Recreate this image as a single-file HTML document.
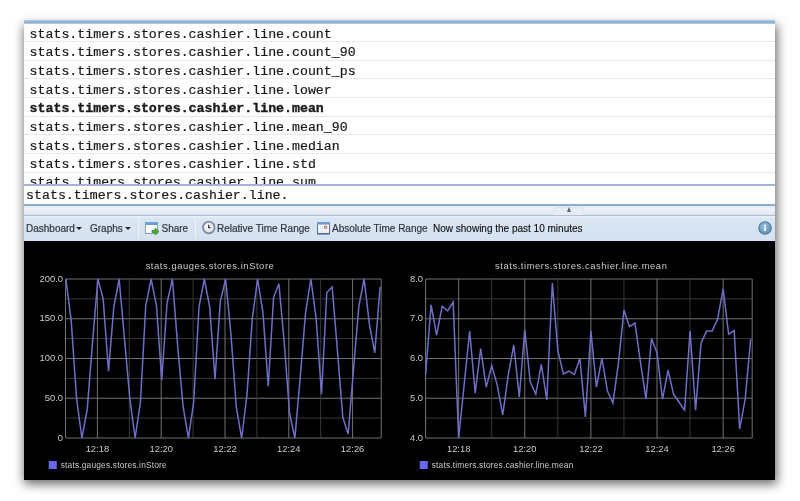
<!DOCTYPE html>
<html><head><meta charset="utf-8">
<style>
*{margin:0;padding:0;box-sizing:border-box}
html,body{width:800px;height:501px;background:#fff;overflow:hidden;position:relative}
#shd{position:absolute;left:24px;top:23px;width:751px;height:457px;box-shadow:0.5px 3px 10px 1px rgba(0,0,0,.6)}
#win{position:absolute;left:24px;top:20px;will-change:transform;filter:blur(0.35px);width:751px;height:460px}
#list{position:absolute;left:0;top:0;width:751px;height:165px;background:#fff;border-top:3px solid transparent;overflow:hidden}
#band{position:absolute;left:0;top:0;width:751px;height:4px;background:linear-gradient(#b2c8e4 0,#9dbadd 35%,#86a7cb 75%,#d6e8f3 100%)}
.row{position:absolute;left:0;width:751px;height:18.6px;border-bottom:1px solid #e9e9e9;font:13.25px "Liberation Mono",monospace;color:#1a1a1a;padding-left:5.6px;padding-top:2.3px;line-height:18px;white-space:pre;-webkit-text-stroke:0.2px #1a1a1a}
.row.b{font-weight:bold;-webkit-text-stroke:0.35px #1a1a1a}
#inp{position:absolute;left:0;top:164px;width:751px;height:22px;background:#fffffd;border-top:2px solid #a6b0db;border-bottom:2.5px solid #8eabcf;font:13.25px "Liberation Mono",monospace;color:#1a1a1a;padding-left:2.1px;padding-top:0.5px;line-height:18px;white-space:pre;-webkit-text-stroke:0.2px #1a1a1a}
#split{position:absolute;left:0;top:186px;width:751px;height:10px;background:linear-gradient(#dce6f2 0,#eef3fa 25%,#e9eff8 55%,#dbe5f2 100%);border-bottom:1.5px solid #b2c0d4}
#tb{position:absolute;left:0;top:196px;width:751px;height:25px;background:linear-gradient(#eaf1fa 0,#e4ecf7 1px,#dae5f2 3px,#d4e1f0 100%);font:10px "Liberation Sans",sans-serif;color:#2e3440;-webkit-text-stroke:0.2px #2e3440}
#tb span{position:absolute;top:7px;white-space:pre}
#charts{position:absolute;left:0;top:221px;width:751px;height:239px;background:#000}
.sep{position:absolute;top:2px;width:1px;height:21px;background:#c4d2e4;border-right:1px solid #eef3fa}
.arr{position:absolute;top:11px;width:0;height:0;border-left:3px solid transparent;border-right:3px solid transparent;border-top:3px solid #222}
</style></head><body>
<div id="shd"></div>
<div id="win">
  <div id="list">
    <div class="row" style="top:0.45px">stats.timers.stores.cashier.line.count</div>
    <div class="row" style="top:19.10px">stats.timers.stores.cashier.line.count_90</div>
    <div class="row" style="top:37.75px">stats.timers.stores.cashier.line.count_ps</div>
    <div class="row" style="top:56.40px">stats.timers.stores.cashier.line.lower</div>
    <div class="row b" style="top:75.05px">stats.timers.stores.cashier.line.mean</div>
    <div class="row" style="top:93.70px">stats.timers.stores.cashier.line.mean_90</div>
    <div class="row" style="top:112.35px">stats.timers.stores.cashier.line.median</div>
    <div class="row" style="top:131.00px">stats.timers.stores.cashier.line.std</div>
    <div class="row" style="top:148.9px">stats.timers.stores.cashier.line.sum</div>
  </div>
  <div id="band"></div>
  <div id="inp">stats.timers.stores.cashier.line.</div>
  <div id="split"><div style="position:absolute;left:529px;top:1px;width:31px;height:8px;background:#e6edf6;border:1px solid #dbe3ee;border-bottom:none;border-radius:4px 4px 0 0"></div><div style="position:absolute;left:542.6px;top:1.2px;width:0;height:0;border-left:2.8px solid transparent;border-right:2.8px solid transparent;border-bottom:5.5px solid #5e6266"></div></div>
  <div id="tb">
    <span style="left:2px">Dashboard</span><div class="arr" style="left:52px"></div>
    <span style="left:66px">Graphs</span><div class="arr" style="left:101px"></div>
    <div class="sep" style="left:114px"></div>
    <span style="left:137.5px">Share</span>
    <div class="sep" style="left:171px"></div>
    <span style="left:193px">Relative Time Range</span>
    <span style="left:308px">Absolute Time Range</span>
    <span style="left:409px;color:#0a0a0a;-webkit-text-stroke:0.1px #0a0a0a">Now showing the past 10 minutes</span>

    <svg style="position:absolute;left:120px;top:5px" width="16" height="15" viewBox="0 0 16 15">
      <rect x="1.5" y="1.5" width="12" height="11" fill="#fbfcfd" stroke="#8fa3bd" stroke-width="1"/>
      <rect x="1" y="1" width="13" height="3" fill="#6e9fd6"/>
      <path d="M8 9.5h3v-2.5l4 3.5-4 3.5v-2.5h-3z" fill="#4fae3a" stroke="#2f8a22" stroke-width="0.8" stroke-linejoin="round"/>
    </svg>
    <svg style="position:absolute;left:178px;top:5px" width="14" height="14" viewBox="0 0 14 14">
      <defs><radialGradient id="kg" cx="45%" cy="40%" r="60%"><stop offset="0" stop-color="#fbfbfb"/><stop offset="1" stop-color="#d9dbe0"/></radialGradient></defs>
      <circle cx="6.8" cy="6.5" r="5.8" fill="url(#kg)" stroke="#7a86a6" stroke-width="1.7"/>
      <path d="M6.7 3.7V6.6h1.8" fill="none" stroke="#2b2b2b" stroke-width="1.2"/>
    </svg>
    <svg style="position:absolute;left:292px;top:5px" width="15" height="15" viewBox="0 0 15 15">
      <defs><linearGradient id="cg" x1="0" y1="0" x2="0" y2="1"><stop offset="0" stop-color="#fdfdfe"/><stop offset="1" stop-color="#e4e8ef"/></linearGradient></defs>
      <rect x="1.5" y="1.5" width="12" height="11.5" fill="url(#cg)" stroke="#5f769a" stroke-width="1"/>
      <rect x="1" y="1" width="13" height="2.6" fill="#6f9ad2"/>
      <line x1="1.5" y1="12.7" x2="13.5" y2="12.7" stroke="#3f5f8f" stroke-width="1"/>
      <circle cx="9.6" cy="6.2" r="1.3" fill="#f3e6e6" stroke="#b44848" stroke-width="0.9"/>
    </svg>
    <svg style="position:absolute;left:733.5px;top:5px" width="14" height="14" viewBox="0 0 14 14">
      <defs><radialGradient id="ig" cx="45%" cy="35%" r="65%"><stop offset="0" stop-color="#9cc0dc"/><stop offset="1" stop-color="#5f8fb2"/></radialGradient></defs>
      <circle cx="7" cy="7" r="6.2" fill="url(#ig)" stroke="#4e7c9c" stroke-width="1.1"/>
      <circle cx="7" cy="4.4" r="1.0" fill="#f4fbff"/>
      <path d="M6.3 5.9h1.4l.5 3.9h-2.4z" fill="#f4fbff"/>
    </svg>
  </div>
  <div id="charts"></div>
</div>
<!--CHARTS--><svg id="chsvg" width="800" height="501" style="position:absolute;left:0;top:0;will-change:transform;filter:blur(0.3px)">
<style>.t{font:9.4px "Liberation Sans",sans-serif;fill:#c8c8c8}.tt{font:9.4px "Liberation Sans",sans-serif;letter-spacing:0.56px;fill:#c8c8c8}.tl{font:8.4px "Liberation Sans",sans-serif;letter-spacing:0.17px;fill:#c8c8c8}</style>
<line x1="65.5" y1="279.00" x2="381.2" y2="279.00" stroke="#727272" stroke-width="1"/>
<line x1="65.5" y1="298.88" x2="381.2" y2="298.88" stroke="#383838" stroke-width="1"/>
<line x1="65.5" y1="318.75" x2="381.2" y2="318.75" stroke="#727272" stroke-width="1"/>
<line x1="65.5" y1="338.62" x2="381.2" y2="338.62" stroke="#383838" stroke-width="1"/>
<line x1="65.5" y1="358.50" x2="381.2" y2="358.50" stroke="#727272" stroke-width="1"/>
<line x1="65.5" y1="378.38" x2="381.2" y2="378.38" stroke="#383838" stroke-width="1"/>
<line x1="65.5" y1="398.25" x2="381.2" y2="398.25" stroke="#727272" stroke-width="1"/>
<line x1="65.5" y1="418.12" x2="381.2" y2="418.12" stroke="#383838" stroke-width="1"/>
<line x1="65.5" y1="438.00" x2="381.2" y2="438.00" stroke="#727272" stroke-width="1"/>
<line x1="65.50" y1="279" x2="65.50" y2="438" stroke="#383838" stroke-width="1"/>
<line x1="97.40" y1="279" x2="97.40" y2="438" stroke="#727272" stroke-width="1"/>
<line x1="129.30" y1="279" x2="129.30" y2="438" stroke="#383838" stroke-width="1"/>
<line x1="161.20" y1="279" x2="161.20" y2="438" stroke="#727272" stroke-width="1"/>
<line x1="193.10" y1="279" x2="193.10" y2="438" stroke="#383838" stroke-width="1"/>
<line x1="225.00" y1="279" x2="225.00" y2="438" stroke="#727272" stroke-width="1"/>
<line x1="256.90" y1="279" x2="256.90" y2="438" stroke="#383838" stroke-width="1"/>
<line x1="288.80" y1="279" x2="288.80" y2="438" stroke="#727272" stroke-width="1"/>
<line x1="320.70" y1="279" x2="320.70" y2="438" stroke="#383838" stroke-width="1"/>
<line x1="352.60" y1="279" x2="352.60" y2="438" stroke="#727272" stroke-width="1"/>
<line x1="65.5" y1="279" x2="65.5" y2="438" stroke="#727272" stroke-width="1"/>
<line x1="381.2" y1="279" x2="381.2" y2="438" stroke="#727272" stroke-width="1"/>
<polyline points="65.90,279.00 71.23,321.13 76.55,398.25 81.88,438.00 87.20,409.38 92.53,342.60 97.85,279.00 103.18,298.88 108.50,371.22 113.83,306.82 119.15,279.00 124.48,338.62 129.80,398.25 135.12,438.00 140.45,402.23 145.78,305.24 151.10,279.00 156.43,305.24 161.75,379.97 167.07,302.85 172.40,279.00 177.73,346.57 183.05,406.20 188.38,438.00 193.70,402.23 199.03,306.82 204.35,279.00 209.68,306.82 215.00,379.17 220.33,301.26 225.65,279.00 230.98,334.65 236.30,407.00 241.62,438.00 246.95,395.07 252.28,318.75 257.60,279.00 262.93,312.39 268.25,386.32 273.58,297.29 278.90,283.77 284.23,342.60 289.55,413.36 294.88,438.00 300.20,377.58 305.52,313.19 310.85,279.00 316.18,318.75 321.50,394.27 326.83,292.51 332.15,286.95 337.48,351.35 342.80,417.33 348.12,434.02 353.45,370.43 358.77,306.82 364.10,279.00 369.43,324.31 374.75,352.94 380.08,286.95" fill="none" stroke="#6e6ec6" stroke-width="1.5" stroke-linejoin="miter"/>
<text x="63.0" y="281.60" text-anchor="end" class="t">200.0</text>
<text x="63.0" y="321.35" text-anchor="end" class="t">150.0</text>
<text x="63.0" y="361.10" text-anchor="end" class="t">100.0</text>
<text x="63.0" y="400.85" text-anchor="end" class="t">50.0</text>
<text x="63.0" y="440.60" text-anchor="end" class="t">0</text>
<text x="97.40" y="451.5" text-anchor="middle" class="t">12:18</text>
<text x="161.20" y="451.5" text-anchor="middle" class="t">12:20</text>
<text x="225.00" y="451.5" text-anchor="middle" class="t">12:22</text>
<text x="288.80" y="451.5" text-anchor="middle" class="t">12:24</text>
<text x="352.60" y="451.5" text-anchor="middle" class="t">12:26</text>
<text x="210" y="268.5" text-anchor="middle" class="tt">stats.gauges.stores.inStore</text>
<rect x="48.75" y="461" width="8" height="8" fill="#6868ee"/>
<text x="60.75" y="467.6" class="tl">stats.gauges.stores.inStore</text>
<line x1="425.6" y1="279.00" x2="752.2" y2="279.00" stroke="#727272" stroke-width="1"/>
<line x1="425.6" y1="298.88" x2="752.2" y2="298.88" stroke="#383838" stroke-width="1"/>
<line x1="425.6" y1="318.75" x2="752.2" y2="318.75" stroke="#727272" stroke-width="1"/>
<line x1="425.6" y1="338.62" x2="752.2" y2="338.62" stroke="#383838" stroke-width="1"/>
<line x1="425.6" y1="358.50" x2="752.2" y2="358.50" stroke="#727272" stroke-width="1"/>
<line x1="425.6" y1="378.38" x2="752.2" y2="378.38" stroke="#383838" stroke-width="1"/>
<line x1="425.6" y1="398.25" x2="752.2" y2="398.25" stroke="#727272" stroke-width="1"/>
<line x1="425.6" y1="418.12" x2="752.2" y2="418.12" stroke="#383838" stroke-width="1"/>
<line x1="425.6" y1="438.00" x2="752.2" y2="438.00" stroke="#727272" stroke-width="1"/>
<line x1="425.60" y1="279" x2="425.60" y2="438" stroke="#383838" stroke-width="1"/>
<line x1="458.66" y1="279" x2="458.66" y2="438" stroke="#727272" stroke-width="1"/>
<line x1="491.72" y1="279" x2="491.72" y2="438" stroke="#383838" stroke-width="1"/>
<line x1="524.78" y1="279" x2="524.78" y2="438" stroke="#727272" stroke-width="1"/>
<line x1="557.84" y1="279" x2="557.84" y2="438" stroke="#383838" stroke-width="1"/>
<line x1="590.90" y1="279" x2="590.90" y2="438" stroke="#727272" stroke-width="1"/>
<line x1="623.96" y1="279" x2="623.96" y2="438" stroke="#383838" stroke-width="1"/>
<line x1="657.02" y1="279" x2="657.02" y2="438" stroke="#727272" stroke-width="1"/>
<line x1="690.08" y1="279" x2="690.08" y2="438" stroke="#383838" stroke-width="1"/>
<line x1="723.14" y1="279" x2="723.14" y2="438" stroke="#727272" stroke-width="1"/>
<line x1="425.6" y1="279" x2="425.6" y2="438" stroke="#727272" stroke-width="1"/>
<line x1="752.2" y1="279" x2="752.2" y2="438" stroke="#727272" stroke-width="1"/>
<polyline points="425.60,374.00 431.11,304.84 436.62,335.05 442.13,306.43 447.64,310.80 453.15,302.06 458.66,438.00 464.17,384.34 469.68,331.07 475.19,393.08 480.70,348.56 486.21,387.12 491.72,365.65 497.23,385.13 502.74,414.94 508.25,375.19 513.76,344.99 519.27,397.06 524.78,329.88 530.29,381.95 535.80,394.28 541.31,364.46 546.82,399.84 552.33,282.97 557.84,350.55 563.35,374.00 568.86,371.22 574.37,374.40 579.88,358.50 585.39,416.93 590.90,331.07 596.41,387.12 601.92,358.10 607.43,391.10 612.94,403.02 618.45,362.87 623.96,310.00 629.47,326.70 634.98,323.12 640.49,362.47 646.00,399.04 651.51,338.62 657.02,352.94 662.53,399.04 668.04,370.03 673.55,394.28 679.06,402.22 684.57,410.17 690.08,331.07 695.59,410.17 701.10,342.60 706.61,331.07 712.12,331.07 717.63,319.15 723.14,288.94 728.65,334.25 734.16,330.68 739.67,428.86 745.18,399.04 750.69,339.02" fill="none" stroke="#6e6ec6" stroke-width="1.5" stroke-linejoin="miter"/>
<text x="423.1" y="281.60" text-anchor="end" class="t">8.0</text>
<text x="423.1" y="321.35" text-anchor="end" class="t">7.0</text>
<text x="423.1" y="361.10" text-anchor="end" class="t">6.0</text>
<text x="423.1" y="400.85" text-anchor="end" class="t">5.0</text>
<text x="423.1" y="440.60" text-anchor="end" class="t">4.0</text>
<text x="458.66" y="451.5" text-anchor="middle" class="t">12:18</text>
<text x="524.78" y="451.5" text-anchor="middle" class="t">12:20</text>
<text x="590.90" y="451.5" text-anchor="middle" class="t">12:22</text>
<text x="657.02" y="451.5" text-anchor="middle" class="t">12:24</text>
<text x="723.14" y="451.5" text-anchor="middle" class="t">12:26</text>
<text x="581.25" y="268.5" text-anchor="middle" class="tt">stats.timers.stores.cashier.line.mean</text>
<rect x="419.75" y="461" width="8" height="8" fill="#6868ee"/>
<text x="431.75" y="467.6" class="tl">stats.timers.stores.cashier.line.mean</text>
</svg><!--/CHARTS-->
</body></html>
